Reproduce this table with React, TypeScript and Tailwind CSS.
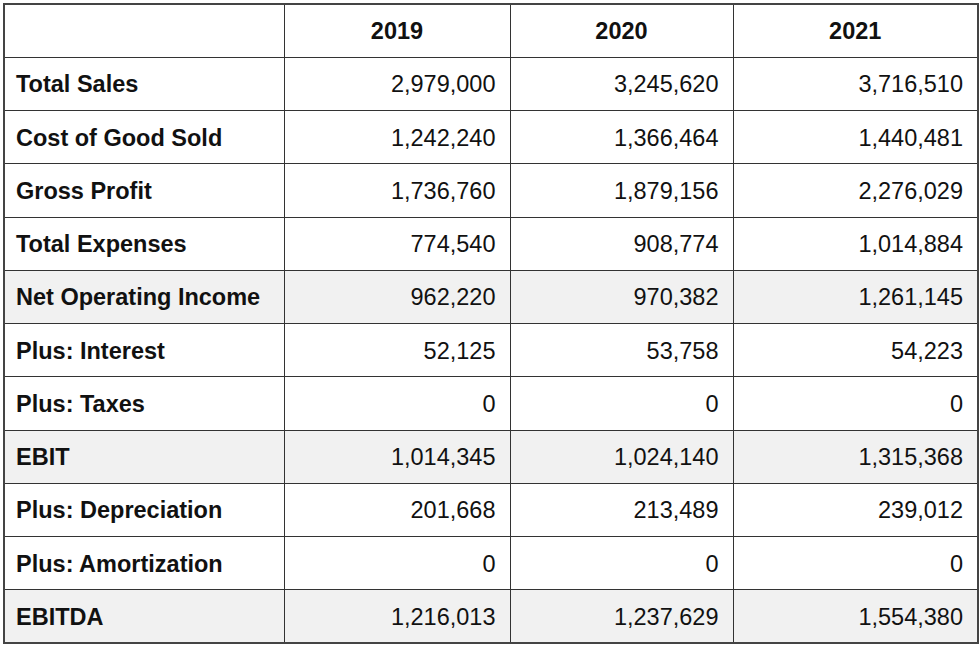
import React from "react";

type Row = { label: string; values: string[]; shaded?: boolean };

const rows: Row[] = [
  { label: "Total Sales", values: ["2,979,000", "3,245,620", "3,716,510"] },
  { label: "Cost of Good Sold", values: ["1,242,240", "1,366,464", "1,440,481"] },
  { label: "Gross Profit", values: ["1,736,760", "1,879,156", "2,276,029"] },
  { label: "Total Expenses", values: ["774,540", "908,774", "1,014,884"] },
  { label: "Net Operating Income", values: ["962,220", "970,382", "1,261,145"], shaded: true },
  { label: "Plus: Interest", values: ["52,125", "53,758", "54,223"] },
  { label: "Plus: Taxes", values: ["0", "0", "0"] },
  { label: "EBIT", values: ["1,014,345", "1,024,140", "1,315,368"], shaded: true },
  { label: "Plus: Depreciation", values: ["201,668", "213,489", "239,012"] },
  { label: "Plus: Amortization", values: ["0", "0", "0"] },
  { label: "EBITDA", values: ["1,216,013", "1,237,629", "1,554,380"], shaded: true },
];

const years = ["2019", "2020", "2021"];

export default function App() {
  return (
    <div className="min-h-[649px] w-[980px] bg-white pl-[3px] pt-[3px] font-['Liberation_Sans',Arial,sans-serif] text-[23.5px] text-[#111]">
      <table className="w-[974px] table-fixed border-collapse border-2 border-[#444]">
        <colgroup>
          <col className="w-[280px]" />
          <col className="w-[226px]" />
          <col className="w-[223px]" />
          <col className="w-[245px]" />
        </colgroup>
        <thead>
          <tr className="h-[53.25px]">
            <th className="border border-[#333]" />
            {years.map((y) => (
              <th key={y} className="border border-[#333] pt-[2px] text-center font-bold">
                {y}
              </th>
            ))}
          </tr>
        </thead>
        <tbody>
          {rows.map((r) => (
            <tr key={r.label} className={`h-[53.25px] ${r.shaded ? "bg-[#f1f1f1]" : ""}`}>
              <td className="border border-[#333] pl-[11px] pt-[2px] font-bold">{r.label}</td>
              {r.values.map((v, i) => (
                <td key={i} className="border border-[#333] pr-[14px] pt-[2px] text-right">
                  {v}
                </td>
              ))}
            </tr>
          ))}
        </tbody>
      </table>
    </div>
  );
}
